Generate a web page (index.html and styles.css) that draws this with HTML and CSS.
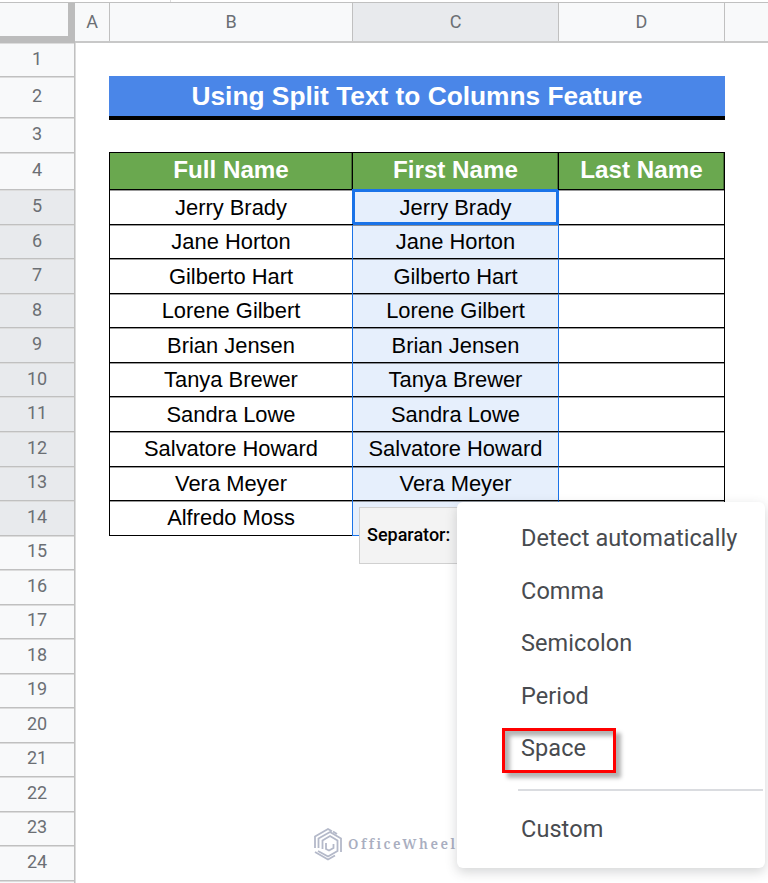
FILE: index.html
```html
<!DOCTYPE html>
<html lang="en">
<head>
    <meta charset="UTF-8">
    <meta name="viewport" content="width=device-width, initial-scale=1.0">
    <title>Split Text to Columns</title>
    <link rel="stylesheet" href="styles.css">
</head>
<body>
    <div class="toolbar-edge"></div>

    <main class="sheet">
        <div class="row col-heads">
            <div class="corner"></div>
            <div class="head col-a">A</div>
            <div class="head col-b">B</div>
            <div class="head col-c active">C</div>
            <div class="head col-d">D</div>
            <div class="head rest"></div>
        </div>

        <div class="row row-1"><div class="num">1</div></div>
        <div class="row row-2">
            <div class="num">2</div>
            <div class="col-a"></div>
            <h1 class="title">Using Split Text to Columns Feature</h1>
        </div>
        <div class="row row-3"><div class="num">3</div></div>
        <div class="row row-4">
            <div class="num">4</div>
            <div class="col-a"></div>
            <div class="th col-b">Full Name</div>
            <div class="th col-c">First Name</div>
            <div class="th col-d">Last Name</div>
        </div>

        <div class="row">
            <div class="num active">5</div>
            <div class="col-a"></div>
            <div class="td col-b">Jerry Brady</div>
            <div class="td col-c selected current">Jerry Brady</div>
            <div class="td col-d"></div>
        </div>
        <div class="row">
            <div class="num active">6</div>
            <div class="col-a"></div>
            <div class="td col-b">Jane Horton</div>
            <div class="td col-c selected">Jane Horton</div>
            <div class="td col-d"></div>
        </div>
        <div class="row">
            <div class="num active">7</div>
            <div class="col-a"></div>
            <div class="td col-b">Gilberto Hart</div>
            <div class="td col-c selected">Gilberto Hart</div>
            <div class="td col-d"></div>
        </div>
        <div class="row">
            <div class="num active">8</div>
            <div class="col-a"></div>
            <div class="td col-b">Lorene Gilbert</div>
            <div class="td col-c selected">Lorene Gilbert</div>
            <div class="td col-d"></div>
        </div>
        <div class="row">
            <div class="num active">9</div>
            <div class="col-a"></div>
            <div class="td col-b">Brian Jensen</div>
            <div class="td col-c selected">Brian Jensen</div>
            <div class="td col-d"></div>
        </div>
        <div class="row">
            <div class="num active">10</div>
            <div class="col-a"></div>
            <div class="td col-b">Tanya Brewer</div>
            <div class="td col-c selected">Tanya Brewer</div>
            <div class="td col-d"></div>
        </div>
        <div class="row">
            <div class="num active">11</div>
            <div class="col-a"></div>
            <div class="td col-b">Sandra Lowe</div>
            <div class="td col-c selected">Sandra Lowe</div>
            <div class="td col-d"></div>
        </div>
        <div class="row">
            <div class="num active">12</div>
            <div class="col-a"></div>
            <div class="td col-b">Salvatore Howard</div>
            <div class="td col-c selected">Salvatore Howard</div>
            <div class="td col-d"></div>
        </div>
        <div class="row">
            <div class="num active">13</div>
            <div class="col-a"></div>
            <div class="td col-b">Vera Meyer</div>
            <div class="td col-c selected">Vera Meyer</div>
            <div class="td col-d"></div>
        </div>
        <div class="row">
            <div class="num active">14</div>
            <div class="col-a"></div>
            <div class="td col-b">Alfredo Moss</div>
            <div class="td col-c selected last"></div>
            <div class="td col-d"></div>
        </div>

        <div class="row"><div class="num">15</div></div>
        <div class="row"><div class="num">16</div></div>
        <div class="row"><div class="num">17</div></div>
        <div class="row"><div class="num">18</div></div>
        <div class="row"><div class="num">19</div></div>
        <div class="row"><div class="num">20</div></div>
        <div class="row"><div class="num">21</div></div>
        <div class="row"><div class="num">22</div></div>
        <div class="row"><div class="num">23</div></div>
        <div class="row"><div class="num">24</div></div>
        <div class="row"><div class="num"></div></div>
    </main>

    <div class="watermark">
        <svg class="logo" width="30" height="34" viewBox="0 0 30 34" fill="none" stroke="#b4b9c9" stroke-width="1.8">
            <path d="M2 21V9.500L15 2l4 2.300M5.500 21V11.500L17 5l11 6.500V25"/>
            <path d="M9.500 22V13.500L17 9l7.500 4.500V24L15 29.500 5 24"/>
            <path d="M2 25L15 32.500 22 28.500M20 4.500L24 7M13 16v6l3 1.500 4.500-2.500v-4"/>
        </svg>
        <span class="brand">OfficeWheel</span>
    </div>

    <div class="separator">Separator:</div>

    <ul class="menu">
        <li>Detect automatically</li>
        <li>Comma</li>
        <li>Semicolon</li>
        <li>Period</li>
        <li class="marked">Space</li>
        <li class="divider"></li>
        <li>Custom</li>
    </ul>
</body>
</html>
```
FILE: styles.css
```css
*,
*::after {
    margin: 0;
    padding: 0;
    box-sizing: border-box;
}

body {
    position: relative;
    width: 768px;
    height: 883px;
    overflow: hidden;
    background: #fff;
    font-family: Roboto, sans-serif;
}

.toolbar-edge {
    height: 2px;
    width: 171px;
    border-right: 1px solid #ddd;
}

/* grid */
.row {
    display: flex;
    height: 34.53px;
}

.row-1 {
    height: 34px;
}

.row-2 {
    height: 41px;
}

.row-3 {
    height: 34.6px;
}

.row-4 {
    height: 37.8px;
}

.col-a {
    width: 35px;
}

.col-b {
    width: 243px;
}

.col-c {
    width: 206px;
}

.col-d {
    width: 166px;
}

.col-heads {
    height: 41px;
    border-top: 1px solid #c0c0c0;
    border-bottom: 2px solid #c8c8c8;
}

.corner {
    width: 75px;
    height: 40px;
    background: #f8f9fa;
    border-right: 7px solid #bcbcbc;
    border-bottom: 7px solid #bcbcbc;
}

.head {
    display: flex;
    align-items: center;
    justify-content: center;
    padding-bottom: 1px;
    background: #f8f9fa;
    border-right: 1px solid #c0c0c0;
    color: #6b6f74;
    font-size: 18px;
}

.head.rest {
    flex: 1;
    border-right: 0;
}

.num {
    display: flex;
    align-items: center;
    justify-content: center;
    width: 75px;
    padding-bottom: 3px;
    background: #f8f9fa;
    border-right: 1px solid #c0c0c0;
    border-bottom: 1px solid #c0c0c0;
    box-shadow: 1px 0 #dcdcdc, inset 0 1px #dcdcdc;
    color: #6b6f74;
    font-size: 18px;
}

.head.active,
.num.active {
    background: #e8eaed;
}

.title {
    display: flex;
    align-items: center;
    justify-content: center;
    width: 616px;
    height: 44px;
    margin-top: -1px;
    margin-left: -1px;
    background: #4a86e8;
    border-bottom: 4px solid #000;
    color: #fff;
    font: bold 26.3px "Liberation Sans", Arial, sans-serif;
}

.th,
.td {
    display: flex;
    align-items: center;
    justify-content: center;
    border-right: 1px solid #000;
    border-bottom: 1px solid #000;
}

.th {
    padding-bottom: 1px;
    background: #6aa84f;
    color: #fff;
    font: bold 24.2px "Liberation Sans", Arial, sans-serif;
    box-shadow: 0 -1px #000, inset -1px 0 rgba(0, 0, 0, 0.35);
}

.td {
    padding-top: 1px;
    box-shadow: inset 0 1px rgba(0, 0, 0, 0.4);
    color: #000;
    font: 21.9px "Liberation Sans", Arial, sans-serif;
}

.th.col-b,
.td.col-b {
    width: 244px;
    margin-left: -1px;
    border-left: 1px solid #000;
}

.td.selected {
    background: #e6effc;
    border-right-color: #1a73e8;
    box-shadow: -1px 0 #1a73e8, inset 0 1px rgba(0, 0, 0, 0.4);
}

.td.current {
    border-bottom-color: #1a73e8;
    box-shadow: -1px -1px #1a73e8, inset 0 0 0 2px #1a73e8;
}

.td.last {
    border-bottom-color: #1a73e8;
}

/* floating parts */
.watermark {
    position: absolute;
    left: 313px;
    top: 827px;
    display: flex;
    align-items: center;
    gap: 5px;
}

.brand {
    color: #a9aec0;
    font: 600 13.5px "Noto Serif", "Liberation Serif", serif;
    letter-spacing: 2.5px;
}

.separator {
    position: absolute;
    left: 359px;
    top: 507px;
    width: 110px;
    height: 57px;
    padding-left: 7px;
    background: #f3f3f3;
    border: 1px solid #d0d0d0;
    color: #000;
    font-size: 18px;
    font-weight: 500;
    line-height: 54px;
}

.menu {
    position: absolute;
    left: 457px;
    top: 502px;
    width: 308px;
    height: 366px;
    padding-top: 10px;
    background: #fff;
    border-radius: 6px;
    box-shadow: 0 4px 12px rgba(60, 64, 67, 0.22);
    list-style: none;
    color: #484b4f;
    font-size: 23.5px;
    letter-spacing: 0.08px;
}

.menu li {
    height: 52.6px;
    padding-left: 64px;
    line-height: 52.6px;
}

.menu .marked {
    position: relative;
}

.menu .marked::after {
    content: "";
    position: absolute;
    left: 45px;
    top: 6px;
    width: 114px;
    height: 45px;
    border: 3px solid #f00;
    box-shadow: 5px 5px 4px rgba(0, 0, 0, 0.3), inset 5px 5px 4px rgba(0, 0, 0, 0.3);
}

.menu .divider {
    height: 2px;
    margin: 14px 2px 12px 61px;
    padding: 0;
    background: #dadce0;
}
```
